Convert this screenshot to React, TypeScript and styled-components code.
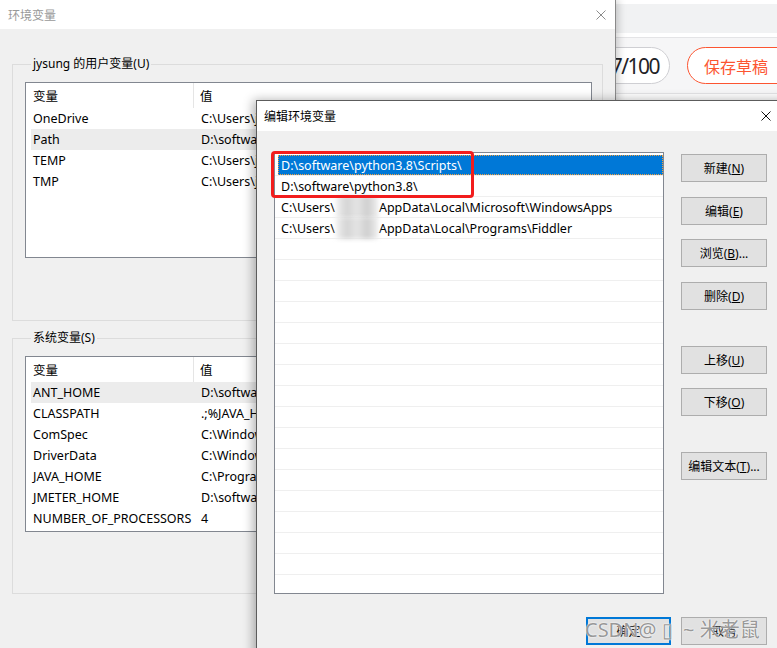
import styled, { createGlobalStyle } from 'styled-components'

const GlobalStyle = createGlobalStyle`
  html, body {
    margin: 0;
    padding: 0;
  }
  body {
    width: 777px;
    height: 648px;
    overflow: hidden;
    font-family: "Noto Sans", "Noto Sans CJK SC", sans-serif;
    font-size: 12px;
    color: #000;
  }
`

const Desktop = styled.div`
  position: relative;
  width: 777px;
  height: 648px;
  overflow: hidden;
  background: #ffffff;
`

/* browser page peeking out on the right */
const BrowserPage = styled.div`
  position: absolute;
  left: 540px;
  top: 0;
  width: 260px;
  height: 110px;
  display: flex;
  flex-direction: column;
  background: #ffffff;
`

const TabStrip = styled.div`
  margin-top: 4px;
  height: 29px;
  background: #f1f2f3;
`

const Toolbar = styled.div`
  margin-top: 4px;
  height: 55px;
  display: flex;
  align-items: center;
  gap: 17px;
  padding-left: 20px;
  background: #f6f6f7;
  border-top: 1px solid #e4e4e6;
  border-bottom: 1px solid #e4e4e6;
`

const Pill = styled.div<{ $accent?: boolean }>`
  height: 37px;
  width: 110px;
  box-sizing: border-box;
  display: flex;
  align-items: center;
  justify-content: ${(p) => (p.$accent ? 'flex-start' : 'flex-end')};
  padding: ${(p) => (p.$accent ? '0 0 0 16px' : '0 10px 0 0')};
  border-radius: 19px;
  background: #fff;
  border: 1px solid ${(p) => (p.$accent ? '#fc5531' : '#cfcfd3')};
  color: ${(p) => (p.$accent ? '#fc5531' : '#222226')};
  font-size: ${(p) => (p.$accent ? '16px' : '21px')};
  letter-spacing: ${(p) => (p.$accent ? '0' : '-1.5px')};
  white-space: nowrap;
`

/* generic window chrome */
const LeftWindow = styled.div`
  position: absolute;
  left: 0;
  top: 0;
  width: 616px;
  height: 660px;
  box-sizing: border-box;
  background: #f0f0f0;
  border-right: 1px solid #8a8a8a;
  box-shadow: 2px 0 8px rgba(0, 0, 0, 0.22);
  display: flex;
  flex-direction: column;
`

const TitleBar = styled.div<{ $active?: boolean }>`
  height: ${(p) => (p.$active ? '30px' : '29px')};
  flex: none;
  display: flex;
  align-items: center;
  justify-content: space-between;
  padding: ${(p) => (p.$active ? '0 18px 0 7px' : '0 9px 0 8px')};
  background: #fff;
  color: ${(p) => (p.$active ? '#000' : '#999')};
  font-size: 12px;
`

const CloseIcon = ({ color }: { color: string }) => (
  <svg width="10" height="10" viewBox="0 0 10 10">
    <path d="M0.5 0.5 L9.5 9.5 M9.5 0.5 L0.5 9.5" stroke={color} strokeWidth="1" />
  </svg>
)

const LeftBody = styled.div`
  padding: 27px 12px 0 12px;
  display: flex;
  flex-direction: column;
  gap: 9px;
`

const GroupBox = styled.fieldset<{ $tail: number }>`
  margin: 0;
  padding: 0 10px ${(p) => p.$tail}px 12px;
  border: 1px solid #dcdcdc;
  min-width: 0;
`

const Legend = styled.legend`
  margin-left: 6px;
  padding: 0 2px;
  line-height: 16px;
  color: #000;
`

const VarList = styled.div`
  margin-top: 10px;
  height: 176px;
  box-sizing: border-box;
  border: 1px solid #828790;
  background: #fff;
  overflow: hidden;
  font-size: 12.5px;
`

const VarHeader = styled.div`
  height: 25px;
  display: flex;
  align-items: center;
`

const HeadCell = styled.div<{ $first?: boolean }>`
  height: 25px;
  display: flex;
  align-items: center;
  box-sizing: border-box;
  width: ${(p) => (p.$first ? '168px' : 'auto')};
  padding-left: ${(p) => (p.$first ? '7px' : '6px')};
  border-right: ${(p) => (p.$first ? '1px solid #e5e5e5' : 'none')};
`

const VarRow = styled.div<{ $hover?: boolean }>`
  height: 21px;
  margin-left: 5px;
  display: flex;
  align-items: center;
  background: ${(p) => (p.$hover ? '#ececec' : 'transparent')};
  white-space: nowrap;
`

const NameCell = styled.div`
  width: 163px;
  flex: none;
  padding-left: 2px;
  box-sizing: border-box;
  overflow: hidden;
`

const ValueCell = styled.div`
  padding-left: 7px;
`

/* edit dialog */
const EditWindow = styled.div`
  position: absolute;
  left: 256px;
  top: 100px;
  width: 534px;
  height: 560px;
  box-sizing: border-box;
  background: #f0f0f0;
  border: 1px solid #5c5c5c;
  box-shadow: -3px 0 10px rgba(0, 0, 0, 0.3);
  display: flex;
  flex-direction: column;
`

const EditBody = styled.div`
  display: grid;
  grid-template-columns: 390px 86px;
  column-gap: 17px;
  padding: 21px 0 0 17px;
`

const PathList = styled.div`
  height: 442px;
  box-sizing: border-box;
  border: 1px solid #828790;
  background: #fff;
  padding-top: 2px;
  overflow: hidden;
  font-size: 12.5px;
`

const PathRow = styled.div`
  height: 21px;
  box-sizing: border-box;
  border-bottom: 1px solid #efefef;
  padding-left: 3px;
  display: flex;
  white-space: nowrap;
`

const PathText = styled.div<{ $selected?: boolean }>`
  flex: 1;
  height: 20px;
  box-sizing: border-box;
  display: flex;
  align-items: center;
  padding-left: 3px;
  background: ${(p) => (p.$selected ? '#0078d7' : 'transparent')};
  color: ${(p) => (p.$selected ? '#fff' : '#000')};
  outline: ${(p) => (p.$selected ? '1px dotted #f0a040' : 'none')};
  outline-offset: -1px;
`

const Smudge = styled.span`
  display: inline-block;
  width: 42px;
  height: 22px;
  margin: 0 1px;
  background: linear-gradient(90deg, #f2f2f2 0%, #d4d4d4 25%, #e4e4e4 50%, #cfcfcf 75%, #eeeeee 100%);
  filter: blur(2px);
`

const ButtonColumn = styled.div`
  display: flex;
  flex-direction: column;
  padding-top: 2px;
`

const WinButton = styled.button<{ $primary?: boolean; $space?: number }>`
  width: ${(p) => (p.$primary ? '85px' : '86px')};
  height: 28px;
  margin: ${(p) => p.$space ?? 0}px 0 0 0;
  padding: 0;
  box-sizing: border-box;
  background: #e1e1e1;
  border: ${(p) => (p.$primary ? '2px solid #0078d7' : '1px solid #adadad')};
  font-family: inherit;
  font-size: 12px;
  color: #000;
`

const Footer = styled.div`
  grid-column: 1 / -1;
  margin-top: 23px;
  display: flex;
  justify-content: flex-end;
  gap: 10px;
`

const RedMark = styled.div`
  position: absolute;
  left: 14px;
  top: 50px;
  width: 203px;
  height: 47px;
  box-sizing: border-box;
  border: 3px solid #f21d1d;
  border-radius: 4px;
  pointer-events: none;
`

const Watermark = styled.div`
  position: absolute;
  left: 585px;
  top: 619px;
  font-size: 20px;
  line-height: 22px;
  white-space: pre;
  color: rgba(125, 125, 125, 0.8);
  text-shadow: 0 0 2px #fff, 0 0 1px #fff;
  pointer-events: none;
`

const userVars = [
  ['OneDrive', 'C:\\Users\\jysung\\OneDrive'],
  ['Path', 'D:\\software\\python3.8\\Scripts\\;D:\\software\\python3.8\\'],
  ['TEMP', 'C:\\Users\\jysung\\AppData\\Local\\Temp'],
  ['TMP', 'C:\\Users\\jysung\\AppData\\Local\\Temp'],
]

const systemVars = [
  ['ANT_HOME', 'D:\\software\\apache-ant-1.10.9'],
  ['CLASSPATH', '.;%JAVA_HOME%\\lib\\dt.jar;%JAVA_HOME%\\lib\\tools.jar'],
  ['ComSpec', 'C:\\Windows\\system32\\cmd.exe'],
  ['DriverData', 'C:\\Windows\\System32\\Drivers\\DriverData'],
  ['JAVA_HOME', 'C:\\Program Files\\Java\\jdk1.8.0_271'],
  ['JMETER_HOME', 'D:\\software\\apache-jmeter-5.4'],
  ['NUMBER_OF_PROCESSORS', '4'],
]

const sideButtons = [
  { label: '新建', key: 'N', space: 0 },
  { label: '编辑', key: 'E', space: 15 },
  { label: '浏览', key: 'B', space: 14, more: true },
  { label: '删除', key: 'D', space: 15 },
  { label: '上移', key: 'U', space: 36 },
  { label: '下移', key: 'O', space: 14 },
  { label: '编辑文本', key: 'T', space: 36, more: true },
]

function VarTable({ rows, hover }: { rows: string[][]; hover: string }) {
  return (
    <VarList>
      <VarHeader>
        <HeadCell $first>变量</HeadCell>
        <HeadCell>值</HeadCell>
      </VarHeader>
      {rows.map(([name, value]) => (
        <VarRow key={name} $hover={name === hover}>
          <NameCell>{name}</NameCell>
          <ValueCell>{value}</ValueCell>
        </VarRow>
      ))}
    </VarList>
  )
}

export default function App() {
  const emptyRows = Array.from({ length: 18 })

  return (
    <Desktop>
      <GlobalStyle />

      <BrowserPage>
        <TabStrip />
        <Toolbar>
          <Pill>7/100</Pill>
          <Pill $accent>保存草稿</Pill>
        </Toolbar>
      </BrowserPage>

      <LeftWindow>
        <TitleBar>
          <span>环境变量</span>
          <CloseIcon color="#8c8c8c" />
        </TitleBar>
        <LeftBody>
          <GroupBox $tail={62}>
            <Legend>jysung 的用户变量(U)</Legend>
            <VarTable rows={userVars} hover="Path" />
          </GroupBox>
          <GroupBox $tail={61}>
            <Legend>系统变量(S)</Legend>
            <VarTable rows={systemVars} hover="ANT_HOME" />
          </GroupBox>
        </LeftBody>
      </LeftWindow>

      <EditWindow>
        <TitleBar $active>
          <span>编辑环境变量</span>
          <CloseIcon color="#111" />
        </TitleBar>
        <EditBody>
          <PathList>
            <PathRow>
              <PathText $selected>D:\software\python3.8\Scripts\</PathText>
            </PathRow>
            <PathRow>
              <PathText>D:\software\python3.8\</PathText>
            </PathRow>
            <PathRow>
              <PathText>
                C:\Users\<Smudge />AppData\Local\Microsoft\WindowsApps
              </PathText>
            </PathRow>
            <PathRow>
              <PathText>
                C:\Users\<Smudge />AppData\Local\Programs\Fiddler
              </PathText>
            </PathRow>
            {emptyRows.map((_, i) => (
              <PathRow key={i} />
            ))}
          </PathList>
          <ButtonColumn>
            {sideButtons.map((b) => (
              <WinButton key={b.key} $space={b.space}>
                {b.label}(<u>{b.key}</u>){b.more ? '...' : ''}
              </WinButton>
            ))}
          </ButtonColumn>
          <Footer>
            <WinButton $primary>确定</WinButton>
            <WinButton>取消</WinButton>
          </Footer>
        </EditBody>
        <RedMark />
      </EditWindow>

      <Watermark>{'CSDN@ ▯  ~ 米老鼠'}</Watermark>
    </Desktop>
  )
}
